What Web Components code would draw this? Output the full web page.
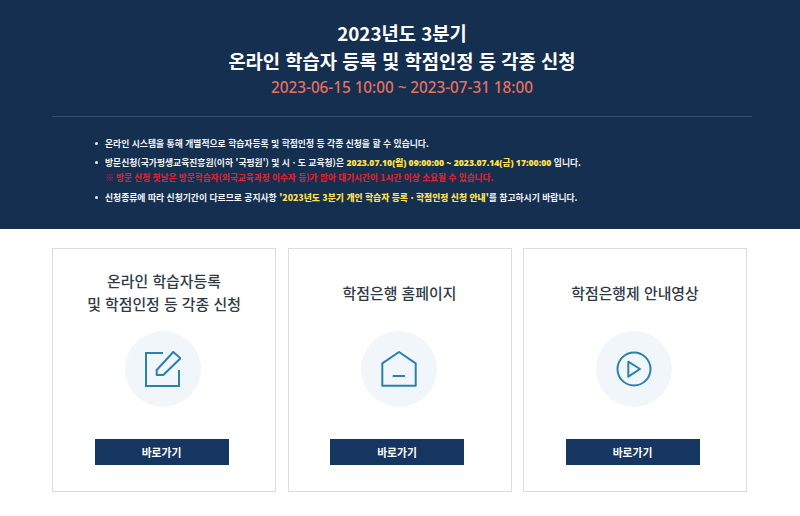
<!DOCTYPE html>
<html lang="ko">
<head>
<meta charset="utf-8">
<title>학점은행</title>
<style>
  html, body { margin: 0; padding: 0; background: #fff; }
  body { font-family: "Noto Sans CJK KR", "Noto Sans", sans-serif; width: 800px; height: 516px; overflow: hidden; }
</style>
</head>
<body>
<apply-banner>
  <span slot="title">2023년도 3분기</span>
  <span slot="subtitle">온라인 학습자 등록 및 학점인정 등 각종 신청</span>
  <span slot="period">2023-06-15 10:00 ~ 2023-07-31 18:00</span>
  <notice-list>
    <notice-item>온라인 시스템을 통해 개별적으로 학습자등록 및 학점인정 등 각종 신청을 할 수 있습니다.</notice-item>
    <notice-item>방문신청(국가평생교육진흥원(이하 '국평원') 및 시 · 도 교육청)은 <b style="color:#ffe14d;font-family:'Noto Sans','Noto Sans CJK KR',sans-serif;font-size:8.680px">2023.07.10(월) 09:00:00 ~ 2023.07.14(금) 17:00:00</b> 입니다.<br><b style="color:#dc2030;font-size:8.650px">※ 방문 신청 첫날은 방문학습자(외국교육과정 이수자 등)가 많아 대기시간이 1시간 이상 소요될 수 있습니다.</b></notice-item>
    <notice-item>신청종류에 따라 신청기간이 다르므로 공지사항 <b style="color:#ffe14d">'2023년도 3분기 개인 학습자 등록 · 학점인정 신청 안내'</b>를 참고하시기 바랍니다.</notice-item>
  </notice-list>
</apply-banner>
<card-row>
  <link-card>
    <span slot="title">온라인 학습자등록<br>및 학점인정 등 각종 신청</span>
    <svg slot="icon" viewBox="0 0 36 36" width="36" height="36" fill="none" stroke="#2a80ae" stroke-width="2" stroke-linejoin="round">
      <path d="M18 2H1v33h33V19" stroke-linejoin="miter"/>
      <path d="M11.700 19 28.300 1 35.500 7.300 18.300 24H11.700z"/>
    </svg>
  </link-card>
  <link-card>
    <span slot="title">학점은행 홈페이지</span>
    <svg slot="icon" viewBox="0 0 36 36" width="36" height="36" fill="none" stroke="#2a80ae" stroke-width="2" stroke-linejoin="round">
      <path d="M1.300 34.700V12.300L18 1l16.700 11.300v22.400z"/>
      <path d="M11.700 25H24"/>
    </svg>
  </link-card>
  <link-card>
    <span slot="title">학점은행제 안내영상</span>
    <svg slot="icon" viewBox="0 0 36 36" width="36" height="36" fill="none" stroke="#2a80ae" stroke-width="2" stroke-linejoin="round">
      <circle cx="18" cy="18" r="16.500"/>
      <path d="M12.300 10.700v15L24 18z"/>
    </svg>
  </link-card>
</card-row>
<script>
  class ApplyBanner extends HTMLElement {
    constructor() {
      super();
      this.attachShadow({ mode: 'open' });
      this.shadowRoot.innerHTML = `
        <style>
          :host { display: block; height: 229px; box-sizing: border-box; background: #152f50; color: #fff; padding-top: 19px; }
          .head { text-align: center; padding-left: 4px; font-weight: 700; font-size: 18.750px; line-height: 28px; }
          .period { text-align: center; padding-left: 4px; font-family: "Noto Sans", "Noto Sans CJK KR", sans-serif; font-size: 15.250px; line-height: 24px; color: #e8705f; font-weight: 500; }
          hr { border: 0; border-top: 1px solid #35506f; margin: 17px 48px 0 52px; }
          .notes { padding: 20px 0 0 95px; }
        </style>
        <div class="head"><slot name="title"></slot><br><slot name="subtitle"></slot></div>
        <div class="period"><slot name="period"></slot></div>
        <hr>
        <div class="notes"><slot></slot></div>`;
    }
  }
  class NoticeList extends HTMLElement {
    constructor() {
      super();
      this.attachShadow({ mode: 'open' });
      this.shadowRoot.innerHTML = `
        <style>
          :host { display: flex; flex-direction: column; gap: 5.300px; font-size: 8.800px; line-height: 14px; font-weight: 700; color: #f2f4f7; }
        </style>
        <slot></slot>`;
    }
  }
  class NoticeItem extends HTMLElement {
    constructor() {
      super();
      this.attachShadow({ mode: 'open' });
      this.shadowRoot.innerHTML = `
        <style>
          :host { display: flex; gap: 7px; white-space: nowrap; }
          i { width: 3px; height: 3px; margin-top: 5px; border-radius: 50%; background: #e8ecf1; flex: none; }
        </style>
        <i></i><div><slot></slot></div>`;
    }
  }
  class CardRow extends HTMLElement {
    constructor() {
      super();
      this.attachShadow({ mode: 'open' });
      this.shadowRoot.innerHTML = `
        <style>
          :host { display: grid; grid-template-columns: repeat(3, 224px); gap: 11.500px; padding: 19px 0 0 52px; }
        </style>
        <slot></slot>`;
    }
  }
  class LinkCard extends HTMLElement {
    constructor() {
      super();
      this.attachShadow({ mode: 'open' });
      this.shadowRoot.innerHTML = `
        <style>
          :host { display: flex; flex-direction: column; align-items: center; box-sizing: border-box; height: 244px; border: 1px solid #dcdcdc; background: #fff; }
          .title { height: 78px; display: flex; align-items: center; justify-content: center; text-align: center; font-size: 14.900px; line-height: 23px; color: #2f3a46; font-weight: 500; margin-top: 4px; }
          .circle { width: 76px; height: 76px; border-radius: 50%; background: #f0f6fa; display: flex; align-items: center; justify-content: center; margin-left: -2px; }
          a { margin-top: 32px; margin-left: -5px; width: 134px; height: 26px; background: #153661; color: #fff; font-size: 10.800px; font-weight: 700; display: flex; align-items: center; justify-content: center; text-decoration: none; }
        </style>
        <div class="title"><slot name="title"></slot></div>
        <div class="circle"><slot name="icon"></slot></div>
        <a href="#">바로가기</a>`;
    }
  }
  customElements.define('apply-banner', ApplyBanner);
  customElements.define('notice-list', NoticeList);
  customElements.define('notice-item', NoticeItem);
  customElements.define('card-row', CardRow);
  customElements.define('link-card', LinkCard);
</script>
</body>
</html>
